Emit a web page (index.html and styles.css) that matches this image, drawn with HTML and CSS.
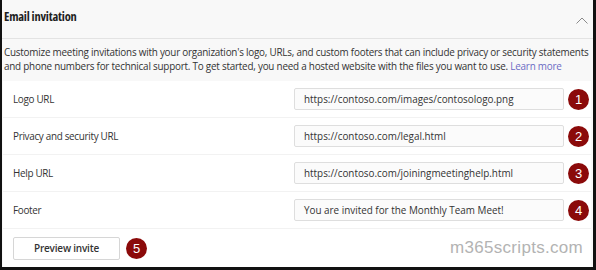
FILE: index.html
```html
<!DOCTYPE html>
<html>
<head>
<meta charset="utf-8">
<link rel="stylesheet" href="styles.css">
</head>
<body>
<div class="frame">
  <div class="header">
    <h1 class="title">Email invitation</h1>
    <svg class="chevron" width="12" height="7" viewBox="0 0 12 7"><path d="M0.5 6.5 L6 1 L11.5 6.5" fill="none" stroke="#8a8a8a" stroke-width="1"/></svg>
  </div>
  <p class="desc">Customize meeting invitations with your organization's logo, URLs, and custom footers that can include privacy or security statements and phone numbers for technical support. To get started, you need a hosted website with the files you want to use. <a class="link">Learn more</a></p>
  <div class="card">
    <div class="row">
      <span class="label">Logo URL</span>
      <div class="field"><div class="input">https://contoso.com/images/contosologo.png</div><span class="badge">1</span></div>
    </div>
    <div class="row">
      <span class="label">Privacy and security URL</span>
      <div class="field"><div class="input">https://contoso.com/legal.html</div><span class="badge">2</span></div>
    </div>
    <div class="row">
      <span class="label">Help URL</span>
      <div class="field"><div class="input">https://contoso.com/joiningmeetinghelp.html</div><span class="badge">3</span></div>
    </div>
    <div class="row">
      <span class="label">Footer</span>
      <div class="field"><div class="input">You are invited for the Monthly Team Meet!</div><span class="badge">4</span></div>
    </div>
    <div class="actions">
      <button class="btn">Preview invite</button>
      <span class="badge">5</span>
      <span class="watermark">m365scripts.com</span>
    </div>
  </div>
</div>
</body>
</html>
```
FILE: styles.css
```css
* { box-sizing: border-box; }
html, body { margin: 0; padding: 0; }
body { font-family: "Open Sans", "Noto Sans", sans-serif; color: #242424; background: #fff; }
.frame {
  width: 596px;
  height: 270px;
  background: #f8f8f8;
  border-left: 2px solid #111;
  border-right: 3px solid #111;
  border-bottom: 3px solid #111;
  display: flex;
  flex-direction: column;
  overflow: hidden;
}
.header {
  height: 39px;
  display: flex;
  align-items: center;
  justify-content: space-between;
  padding: 0 5px 0 2px;
  border-bottom: 1px solid #e3e3e3;
}
.title {
  margin: 0 0 6px 0;
  font-size: 12.5px;
  font-weight: 700;
  font-stretch: 87%;
  letter-spacing: -0.2px;
  color: #1f1f1f;
}
.chevron { margin-top: 2px; }
.desc {
  margin: 0;
  padding: 7px 2px 0 2px;
  height: 42px;
  font-size: 9.9px;
  line-height: 13.5px;
  letter-spacing: -0.22px;
  color: #333;
}
.link { color: #6b6bc4; }
.card {
  flex: 1;
  background: #fff;
  margin: 0 2px 0 1px;
  display: flex;
  flex-direction: column;
}
.row {
  height: 37px;
  display: flex;
  align-items: center;
  justify-content: space-between;
  padding-left: 10px;
  border-bottom: 1px solid #f2f2f2;
}
.label { font-size: 9.9px; letter-spacing: -0.3px; color: #333; }
.field { display: flex; align-items: center; }
.input {
  width: 270px;
  height: 22px;
  border: 1px solid #dedede;
  border-radius: 2px;
  background: #fbfbfb;
  font-size: 9.9px;
  line-height: 20px;
  padding-left: 9px;
  color: #333;
}
.badge {
  width: 21px;
  height: 21px;
  border-radius: 50%;
  background: #8b0a0a;
  color: #fff;
  font-family: "Liberation Sans", sans-serif;
  font-size: 13px;
  display: flex;
  align-items: center;
  justify-content: center;
  margin: 0 2px 0 4px;
}
.actions {
  flex: 1;
  display: flex;
  align-items: center;
  padding-left: 10px;
  padding-right: 8px;
}
.btn {
  width: 107px;
  height: 23px;
  border: 1px solid #d6d6d6;
  border-radius: 2px;
  background: #fff;
  font-family: "Open Sans", sans-serif;
  font-size: 10px;
  font-weight: 600;
  letter-spacing: -0.2px;
  color: #333;
  margin-right: 2px;
}
.watermark {
  margin-left: auto;
  font-family: "Liberation Sans", sans-serif;
  font-size: 17px;
  color: #b3b3b3;
  letter-spacing: 0.3px;
}
```
